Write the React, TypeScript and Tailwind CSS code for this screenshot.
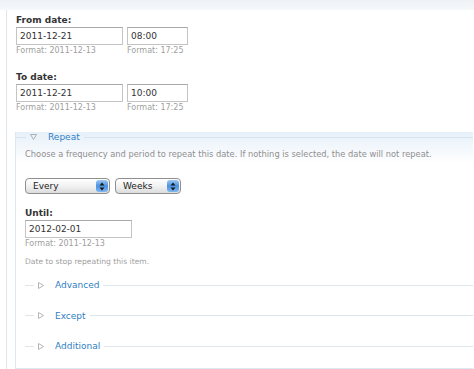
import React from "react";

const font = "font-['DejaVu_Sans',Verdana,sans-serif]";

function DateField({ label, date, time }: { label: string; date: string; time: string }) {
  return (
    <div>
      <div className="text-[9px] font-bold leading-[12px] text-[#333]">{label}</div>
      <div className="mt-px flex gap-[4px]">
        <div className="h-[18px] w-[107px] border border-[#c4c4c4] border-t-[#a8a8a8] px-[3px] text-[9px] leading-[16px] text-[#333]">
          {date}
        </div>
        <div className="h-[18px] w-[61px] border border-[#c4c4c4] border-t-[#a8a8a8] px-[3px] text-[9px] leading-[16px] text-[#333]">
          {time}
        </div>
      </div>
      <div className="flex text-[8px] leading-[11px] text-[#a0a0a0]">
        <span className="w-[111px]">Format: 2011-12-13</span>
        <span>Format: 17:25</span>
      </div>
    </div>
  );
}

function Stepper() {
  return (
    <div className="flex h-[12px] w-[12px] items-center justify-center rounded-[3px] bg-linear-to-b from-[#9cc8f2] via-[#4b92e0] to-[#7fb6ee]">
      <svg width="6" height="9" viewBox="0 0 6 9">
        <polygon points="3,0.5 5.5,3.5 0.5,3.5" fill="#1a1a1a" />
        <polygon points="3,8.5 5.5,5.5 0.5,5.5" fill="#1a1a1a" />
      </svg>
    </div>
  );
}

function Select({ value, width }: { value: string; width: string }) {
  return (
    <div
      className={`flex h-[16px] items-center justify-between rounded-[4px] border border-[#8f8f8f] bg-linear-to-b from-white via-[#f2f2f2] to-[#dcdcdc] pl-[7px] pr-px text-[9px] text-[#222] ${width}`}
    >
      <span className="leading-[14px]">{value}</span>
      <Stepper />
    </div>
  );
}

function Collapsed({ title }: { title: string }) {
  return (
    <div className="flex h-[10px] items-center">
      <div className="h-px w-[9px] bg-[#dde6ed]" />
      <svg className="ml-[4px]" width="6" height="7" viewBox="0 0 6 7">
        <polygon points="0.5,0.5 5.5,3.5 0.5,6.5" fill="none" stroke="#b5b5b5" />
      </svg>
      <span className="ml-[11px] text-[9px] leading-[10px] text-[#2f80c4]">{title}</span>
      <div className="ml-[4px] h-px flex-1 bg-[#dde6ed]" />
    </div>
  );
}

export default function App() {
  return (
    <div className={`h-[369px] w-[474px] overflow-hidden bg-white ${font}`}>
      <div className="h-[10px] bg-linear-to-b from-[#eef2f6] to-[#f6f8fa]" />
      <div className="ml-[6px] h-[359px] border-l border-[#e3e6e9] pl-[9px] pr-px pt-[4px]">
        <DateField label="From date:" date="2011-12-21" time="08:00" />
        <div className="mt-[15px]">
          <DateField label="To date:" date="2011-12-21" time="10:00" />
        </div>

        <div className="-ml-px mt-[24px] border-b border-l border-[#dce7f0]">
          <div className="bg-linear-to-b from-[#e6f0f9] to-white pb-[3px]">
            <div className="-mt-[5px] flex h-[10px] items-center">
              <div className="h-px w-[10px] bg-[#d6e3ee]" />
              <svg className="ml-[4px]" width="7" height="6" viewBox="0 0 7 6">
                <polygon points="0.5,0.5 6.5,0.5 3.5,5.5" fill="none" stroke="#b0b0b0" />
              </svg>
              <span className="ml-[11px] text-[9px] leading-[10px] text-[#2f80c4]">Repeat</span>
              <div className="ml-[4px] h-px flex-1 bg-[#d6e3ee]" />
            </div>
            <div className="mt-[7px] whitespace-nowrap pl-[9px] text-[8.3px] leading-[11px] text-[#8f8f8f]">
              Choose a frequency and period to repeat this date. If nothing is selected, the date will not repeat.
            </div>
          </div>

          <div className="pl-[9px]">
            <div className="mt-[15px] flex gap-[5px]">
              <Select value="Every" width="w-[85px]" />
              <Select value="Weeks" width="w-[66px]" />
            </div>

            <div className="mt-[13px] text-[9px] font-bold leading-[12px] text-[#333]">Until:</div>
            <div className="mt-px h-[18px] w-[107px] border border-[#c4c4c4] border-t-[#a8a8a8] px-[3px] text-[9px] leading-[16px] text-[#333]">
              2012-02-01
            </div>
            <div className="text-[8px] leading-[11px] text-[#a0a0a0]">Format: 2011-12-13</div>
            <div className="mt-[8px] text-[7.6px] leading-[10px] text-[#a0a0a0]">Date to stop repeating this item.</div>

            <div className="mt-[13px] flex flex-col gap-[20.5px] pb-[17px]">
              <Collapsed title="Advanced" />
              <Collapsed title="Except" />
              <Collapsed title="Additional" />
            </div>
          </div>
        </div>
      </div>
    </div>
  );
}
